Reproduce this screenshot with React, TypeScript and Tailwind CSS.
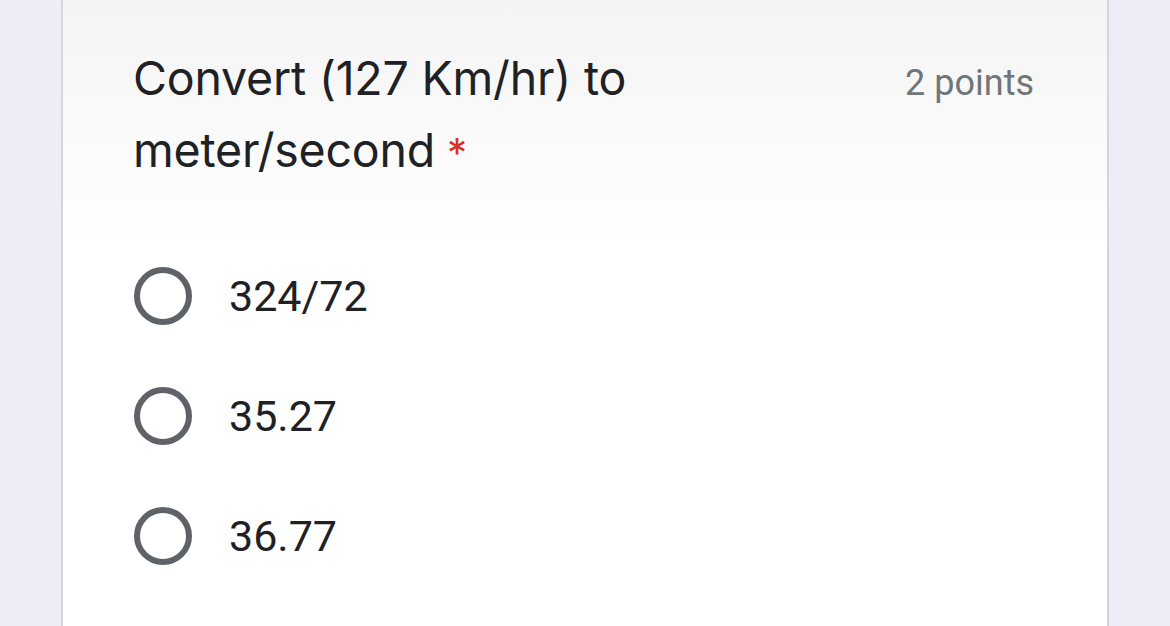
import React from "react";

const options = ["324/72", "35.27", "36.77"];

function Radio() {
    return (
        <svg width="60" height="60" viewBox="0 0 60 60" className="shrink-0">
            <circle cx="30" cy="30" r="26" fill="none" stroke="#5f6368" strokeWidth="6" />
        </svg>
    );
}

export default function App() {
    return (
        <main className="w-[1170px] h-[626px] overflow-hidden bg-[#efecf8] px-[61px]">
            <section className="h-full border-x-2 border-[#d6d5dc] bg-gradient-to-b from-[#f4f4f4] via-white via-40% to-white pl-[70px] pr-[73px] pt-[42px]">
                <div className="flex justify-between items-start">
                    <h1 className="text-[#202124] text-[46.5px] leading-[72px] w-[620px] font-['Inter',sans-serif] tracking-[-0.2px]">
                        Convert (127 Km/hr) to meter/second
                        <span className="inline-block leading-none text-[#d93025] text-[40px] ml-3">*</span>
                    </h1>
                    <span className="text-[#70757a] text-[36px] leading-[71px] font-['Roboto',sans-serif] mt-[6px]">2 points</span>
                </div>
                <ul className="mt-[80px] flex flex-col gap-[60px]">
                    {options.map((o) => (
                        <li key={o} className="flex items-center gap-[36px] h-[60px]">
                            <Radio />
                            <span className="text-[#202124] text-[43px] font-['Roboto',sans-serif]">{o}</span>
                        </li>
                    ))}
                </ul>
            </section>
        </main>
    );
}
